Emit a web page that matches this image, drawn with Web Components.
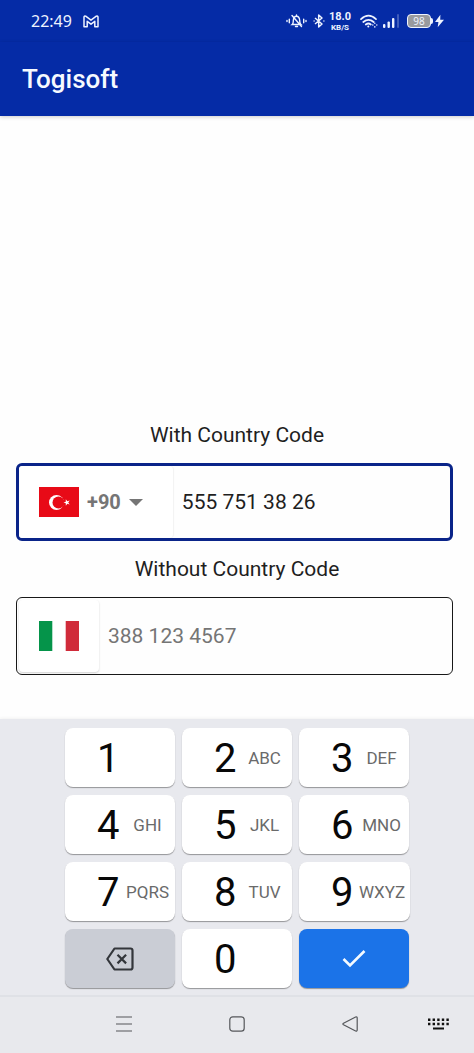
<!DOCTYPE html>
<html lang="en">
<head>
<meta charset="utf-8">
<meta name="viewport" content="width=device-width, initial-scale=1">
<title>Togisoft</title>
<style>
  body { margin: 0; font-family: Roboto, "Noto Sans", sans-serif; color: #1f1f1f; background: #fefefe; }
</style>
</head>
<body>
<phone-screen>
  <status-bar slot="top"></status-bar>
  <app-header slot="top">Togisoft</app-header>
  <phone-field label="With Country Code" country="tr" dial="+90" value="555 751 38 26" active></phone-field>
  <phone-field label="Without Country Code" country="it" placeholder="388 123 4567"></phone-field>
  <number-pad slot="bottom"></number-pad>
  <nav-bar slot="bottom"></nav-bar>
</phone-screen>

<script>
const define = (name, html, setup) => {
  const tpl = document.createElement('template');
  tpl.innerHTML = html;
  customElements.define(name, class extends HTMLElement {
    connectedCallback() {
      if (this.shadowRoot) return;
      this.attachShadow({ mode: 'open' }).append(tpl.content.cloneNode(true));
      if (setup) setup(this, this.shadowRoot);
    }
  });
};

define('phone-screen', `
<style>
  :host { display: flex; flex-direction: column; min-height: 100vh; }
  main { flex: 1; display: flex; flex-direction: column; justify-content: flex-end; gap: 14px; padding: 24px 16px 44px; }
</style>
<slot name="top"></slot>
<main><slot></slot></main>
<slot name="bottom"></slot>`);

define('status-bar', `
<style>
  :host { display: flex; align-items: center; height: 42px; padding: 0 30px 0 31px; background: #052ba6; color: #eef3ff; font-family: "Noto Sans", sans-serif; }
  svg { display: block; }
  time { font-size: 16px; line-height: 20px; }
  .mail { margin-left: 11px; }
  .right { margin-left: auto; display: flex; align-items: center; }
  .bluetooth { margin-left: 6px; }
  .rate { display: flex; flex-direction: column; align-items: center; width: 24px; margin: 0 8px 0 3px; font: 700 11px/13px Roboto, sans-serif; }
  .rate small { font-size: 8px; line-height: 9px; }
  .wifi { margin-right: 5px; }
  .signal { margin-right: 7px; }
  .battery { display: flex; align-items: center; }
  .level { box-sizing: border-box; width: 24px; height: 14px; border: 1px solid #eef3ff; border-radius: 4px; background: #999a9e; font-size: 10px; line-height: 12px; text-align: center; }
  .tip { width: 2px; height: 6px; background: #eef3ff; border-radius: 0 2px 2px 0; }
  .bolt { margin-left: 2px; }
</style>
<time>22:49</time>
<svg class="mail" width="16" height="13" viewBox="0 0 16 13" fill="none" stroke="currentColor" stroke-width="1.5" stroke-linejoin="round"><path d="M1 11.700V2.200Q1 .8 2.700 1.200L8 5.200l5.300-4Q15 .8 15 2.200v9.500h-3.200V6.300L8 9.200 4.200 6.300v5.400Z"/></svg>
<div class="right">
  <svg width="21" height="14" viewBox="0 0 21 14" fill="none" stroke="currentColor" stroke-width="1.400" stroke-linecap="round"><path d="M1 6.500v1M3.300 5.200v3.600M17.700 5.200v3.600M20 6.500v1M6.200 10.500c1.200-1 1-2 1.100-4C7.500 3.800 9 2.300 10.500 2.300s3 1.500 3.200 4.200c.1 2 0 3 1.200 4ZM9.500 12.500h2M10.500 1v1M6 1.500l9.500 11"/></svg>
  <svg class="bluetooth" width="12" height="14" viewBox="0 0 12 14" fill="none" stroke="currentColor" stroke-width="1.500" stroke-linejoin="round"><path d="m2 4 7 6-3.300 3V1L9 4 2 10M.6 7h1M10.400 7h1"/></svg>
  <span class="rate"><span>18.0</span><small>KB/S</small></span>
  <svg class="wifi" width="18" height="15" viewBox="0 0 18 15" fill="none" stroke="currentColor" stroke-width="1.700" stroke-linecap="round"><path d="M1 5.200Q8.500-1.800 16 5.200M3.300 8q5.200-4.400 10.400 0M5.800 10.500q2.700-2 5 0"/><circle cx="8.300" cy="12.600" r="1" fill="currentColor" stroke="none"/><path stroke-width="1.500" d="M14.800 9.200v.1M14.800 12.800v.1M12.800 11v.1M16.800 11v.1"/></svg>
  <svg class="signal" width="17" height="14" viewBox="0 0 17 14" fill="currentColor"><rect y="10" width="2.400" height="4" rx="1"/><rect x="4.500" y="7.500" width="2.400" height="6.500" rx="1"/><rect x="9" y="4" width="2.400" height="10" rx="1"/><rect x="14" width="2" height="14" rx="1" opacity=".25"/></svg>
  <span class="battery"><span class="level">98</span><span class="tip"></span></span>
  <svg class="bolt" width="9" height="14" viewBox="0 0 10 14" fill="currentColor"><path d="M6 0 0 8h3.800L3 14l7-8.500H5.800Z"/></svg>
</div>`);

define('app-header', `
<style>
  :host { display: block; position: relative; padding: 22px 22px 21px; background: #052ba6; color: #f6faff; box-shadow: 0 1px 4px #0003; }
  h1 { margin: 0; font-size: 26px; line-height: 31px; font-weight: 500; }
</style>
<h1><slot></slot></h1>`);

define('phone-field', `
<style>
  :host { display: flex; flex-direction: column; gap: 14px; }
  label { font-size: 21px; line-height: 28px; text-align: center; }
  .box { box-sizing: border-box; display: flex; height: 78px; margin-right: 5px; padding: 2px; border: 1px solid #181818; border-radius: 6px; background: #fefefe; }
  :host([active]) .box { padding: 0; border-width: 3px; border-color: #0a2489; }
  button { display: flex; align-items: center; gap: 8px; margin: 0; padding: 0 20px; border: 0; border-radius: 4px; background: #fff; box-shadow: 0 1px 2px #0000002e; font: 700 20px Roboto, sans-serif; color: #757575; }
  :host([active]) button { padding-right: 30px; box-shadow: 1px 0 1px #0000000d; }
  svg { display: block; }
  input { flex: 1; min-width: 0; margin: 0; padding: 0 9px; border: 0; outline: 0; background: transparent; font: 21px Roboto, sans-serif; color: #1f1f1f; }
  input::placeholder { color: #757575; opacity: 1; }
</style>
<label for="phone"></label>
<div class="box"><button type="button"></button><input id="phone" type="tel"></div>`,
(host, root) => {
  const flags = {
    tr: ['Turkey', '<svg width="40" height="30" viewBox="0 0 40 30"><path fill="#e80a17" d="M0 0h40v30H0z"/><circle cx="17.500" cy="15.500" r="7.500" fill="#fff"/><circle cx="19.500" cy="15.500" r="6" fill="#e80a17"/><path fill="#fff" d="m24.500 15.500 2.300-.8v-2.500l1.500 2 2.400-.8-1.500 2.100 1.500 2.100-2.400-.8-1.500 2v-2.500Z"/></svg>'],
    it: ['Italy', '<svg width="40" height="30" viewBox="0 0 40 30"><path fill="#fff" d="M0 0h40v30H0z"/><path fill="#05944a" d="M0 0h13.300v30H0z"/><path fill="#d02b3a" d="M26.700 0H40v30H26.700z"/></svg>']
  };
  const [name, flag] = flags[host.getAttribute('country')];
  const dial = host.getAttribute('dial');
  root.querySelector('label').textContent = host.getAttribute('label');
  const button = root.querySelector('button');
  button.setAttribute('aria-label', 'Country: ' + name);
  button.innerHTML = flag + (dial ? '<span>' + dial + '</span><svg width="14" height="7" viewBox="0 0 14 7"><path fill="#757575" d="M0 0h14L7 7Z"/></svg>' : '');
  const input = root.querySelector('input');
  input.value = host.getAttribute('value') || '';
  input.placeholder = host.getAttribute('placeholder') || '';
});

define('pad-key', `
<style>
  :host { display: grid; }
  button { display: grid; grid-template-columns: 22px 1fr; gap: 6px; align-items: center; height: 59px; margin: 0; padding: 0 5px 0 32px; border: 0; border-radius: 8px; background: #fff; box-shadow: 0 1px 1px #0000005c; color: #080808; font: 40px Roboto, sans-serif; text-align: center; }
  .digit { line-height: 44px; padding-top: 2px; }
  .letters { font-size: 17px; line-height: 20px; color: #6a6a6a; justify-self: center; }
  :host([kind]) button { display: flex; justify-content: center; padding: 0; }
  :host([kind="delete"]) button { background: #cacdd5; }
  :host([kind="done"]) button { background: #1b73e8; }
  :host([kind]) .digit, :host([kind]) .letters { display: none; }
</style>
<button type="button"><span class="digit"></span><span class="letters"></span><slot></slot></button>`,
(host, root) => {
  root.querySelector('.digit').textContent = host.getAttribute('digit') || '';
  root.querySelector('.letters').textContent = host.getAttribute('letters') || '';
  if (host.hasAttribute('kind')) root.querySelector('button').setAttribute('aria-label', host.getAttribute('kind'));
});

define('number-pad', `
<style>
  :host { display: block; padding: 9px 16px 7px; background: #e8e9ee; box-shadow: 0 -1px 3px #0000000d; }
  .keys { display: grid; grid-template-columns: repeat(3, minmax(0, 1fr)); gap: 8px 7px; max-width: 344px; margin: 0 auto; }
  svg { display: block; }
</style>
<div class="keys">
  <pad-key digit="1"></pad-key>
  <pad-key digit="2" letters="ABC"></pad-key>
  <pad-key digit="3" letters="DEF"></pad-key>
  <pad-key digit="4" letters="GHI"></pad-key>
  <pad-key digit="5" letters="JKL"></pad-key>
  <pad-key digit="6" letters="MNO"></pad-key>
  <pad-key digit="7" letters="PQRS"></pad-key>
  <pad-key digit="8" letters="TUV"></pad-key>
  <pad-key digit="9" letters="WXYZ"></pad-key>
  <pad-key kind="delete"><svg width="28" height="24" viewBox="0 0 28 24" fill="none" stroke="#33363b" stroke-width="2.200" stroke-linejoin="round"><path d="M8.500 1.500h16q2 0 2 2v17q0 2-2 2h-16L1.300 12Z"/><path d="m11.500 7.800 8.600 8.600m0-8.600-8.600 8.600"/></svg></pad-key>
  <pad-key digit="0"></pad-key>
  <pad-key kind="done"><svg width="24" height="19" viewBox="0 0 24 19" fill="none" stroke="#f4faff" stroke-width="2.600"><path d="m1.500 10 6.500 6.500L22.500 2"/></svg></pad-key>
</div>`);

define('nav-bar', `
<style>
  :host { display: block; border-top: 2px solid #dfe1e6; background: #e8e9ed; }
  nav { display: grid; grid-template-columns: 67px 1fr 1fr 1fr 67px; height: 54px; padding-bottom: 2px; }
  button { display: grid; place-items: center; margin: 0; padding: 0; border: 0; background: none; }
  button:first-child { grid-column: 2; }
  button:last-child { padding-right: 4px; }
  svg { display: block; }
</style>
<nav>
  <button type="button" aria-label="Recent apps"><svg width="16" height="16" viewBox="0 0 16 16" stroke="#55575b" stroke-width="1.200"><path d="M0 1h16M0 8h16M0 15h16"/></svg></button>
  <button type="button" aria-label="Home"><svg width="16" height="16" viewBox="0 0 16 16" fill="none" stroke="#55575b" stroke-width="1.200"><rect x=".8" y=".8" width="14.400" height="14.400" rx="3"/></svg></button>
  <button type="button" aria-label="Back"><svg width="16" height="16" viewBox="0 0 16 16" fill="none" stroke="#55575b" stroke-width="1.200" stroke-linejoin="round"><path d="M1.500 7.200 13.600 1Q15.200.7 15.200 2v12q0 1.300-1.600 1L1.500 8.800Q.3 8 1.500 7.200Z"/></svg></button>
  <button type="button" aria-label="Switch keyboard"><svg width="21" height="12" viewBox="0 0 21 12" stroke="#111" fill="none"><path stroke-width="2.400" stroke-dasharray="2.400 2.200" d="M0 1.700h21M0 6h21"/><path stroke-width="2" d="M5 10.500h11"/></svg></button>
</nav>`);
</script>
</body>
</html>
